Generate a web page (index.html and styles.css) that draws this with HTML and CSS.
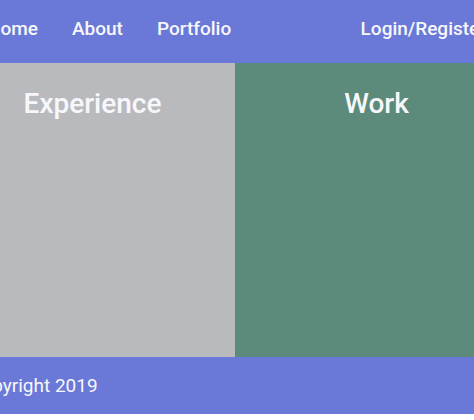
FILE: index.html
```html
<!DOCTYPE html>
<html lang="en">
<head>
<meta charset="utf-8">
<title>Portfolio</title>
<link rel="stylesheet" href="styles.css">
</head>
<body>
<div class="page">
  <header class="nav">
    <nav class="nav-left">
      <a class="nav-link" href="#">Home</a>
      <a class="nav-link" href="#">About</a>
      <a class="nav-link" href="#">Portfolio</a>
    </nav>
    <a class="nav-link" href="#">Login/Register</a>
  </header>
  <main class="main">
    <section class="col col-exp">
      <h2 class="col-title">Experience</h2>
    </section>
    <section class="col col-work">
      <h2 class="col-title">Work</h2>
    </section>
  </main>
  <footer class="footer">Copyright 2019</footer>
</div>
</body>
</html>
```
FILE: styles.css
```css
html, body {
  margin: 0;
  padding: 0;
  overflow: hidden;
  background: #ffffff;
}
body {
  font-family: Roboto, "Liberation Sans", sans-serif;
  color: #f7f7fb;
}
.page {
  width: 568px;
  margin-left: -50px;
}
.nav {
  height: 63px;
  background: #6a79d7;
  display: flex;
  align-items: center;
  justify-content: space-between;
  padding: 0 32px 6px 37px;
  box-sizing: border-box;
}
.nav-left {
  display: flex;
  gap: 34px;
}
.nav-link {
  color: #f7f7fb;
  text-decoration: none;
  font-size: 19px;
  font-weight: 500;
}
.main {
  height: 294px;
  display: grid;
  grid-template-columns: 285px 1fr;
}
.col {
  text-align: center;
}
.col-exp {
  background: #b9babe;
}
.col-work {
  background: #5c8b7b;
}
.col-title {
  margin: 24px 0 0;
  font-size: 28px;
  font-weight: 500;
}
.footer {
  height: 57px;
  background: #6a79d7;
  display: flex;
  align-items: center;
  padding-left: 19px;
  font-size: 19px;
}
```
